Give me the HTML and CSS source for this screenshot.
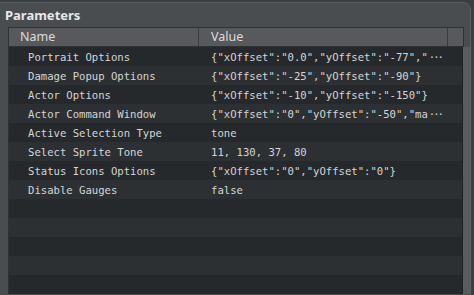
FILE: index.html
```html
<!DOCTYPE html>
<html lang="en">
<head>
    <meta charset="UTF-8">
    <title>Parameters</title>
    <link rel="stylesheet" href="styles.css">
</head>
<body>
    <div class="panel">
        <h1>Parameters</h1>
        <div class="table">
            <div class="head">
                <div class="col-name">Name</div>
                <div class="col-value">Value</div>
                <div class="col-corner"></div>
            </div>
            <div class="body">
                <div class="rows">
                    <div class="row"><span class="name">Portrait Options</span><span class="value">{"xOffset":"0.0","yOffset":"-77","<span class="more">···</span></span></div>
                    <div class="row"><span class="name">Damage Popup Options</span><span class="value">{"xOffset":"-25","yOffset":"-90"}</span></div>
                    <div class="row"><span class="name">Actor Options</span><span class="value">{"xOffset":"-10","yOffset":"-150"}</span></div>
                    <div class="row"><span class="name">Actor Command Window</span><span class="value">{"xOffset":"0","yOffset":"-50","ma<span class="more">···</span></span></div>
                    <div class="row"><span class="name">Active Selection Type</span><span class="value">tone</span></div>
                    <div class="row"><span class="name">Select Sprite Tone</span><span class="value">11, 130, 37, 80</span></div>
                    <div class="row"><span class="name">Status Icons Options</span><span class="value">{"xOffset":"0","yOffset":"0"}</span></div>
                    <div class="row"><span class="name">Disable Gauges</span><span class="value">false</span></div>
                    <div class="row"></div>
                    <div class="row"></div>
                    <div class="row"></div>
                    <div class="row"></div>
                    <div class="row"></div>
                </div>
                <div class="scroll"></div>
            </div>
        </div>
    </div>
</body>
</html>
```

FILE: styles.css
```css
body {
    margin: 0;
    background: #3c3f42;
    height: 295px;
    overflow: hidden;
    font-family: "Noto Sans", sans-serif;
}
.panel {
    margin: 2px 3px 0 -2px;
    height: 300px;
    background: #4a4d50;
    border: 1px solid #5c5f62;
    border-radius: 0 8px 0 0;
    padding: 4px 0 0 6px;
}
h1 {
    margin: 0 0 3px 0;
    font-size: 13px;
    font-weight: bold;
    color: #e8e8e8;
    height: 17px;
    line-height: 17px;
}
.table {
    margin-left: 3px;
}
.head {
    display: flex;
    height: 18px;
    margin-right: 6px;
    background: #57595c;
    border: 1px solid #2f3234;
    font-size: 12.5px;
    line-height: 18px;
    color: #dcdcdc;
}
.col-name {
    width: 190px;
    padding-left: 11px;
    border-right: 1px solid #3a3d40;
    box-sizing: border-box;
}
.col-value {
    flex: 1;
    padding-left: 12px;
    border-right: 1px solid #3a3d40;
}
.col-corner {
    width: 15px;
}
.body {
    display: flex;
}
.rows {
    flex: 1;
    background: #25292b;
    border-left: 1px solid #2f3234;
    border-right: 1px solid #1f2224;
}
.row {
    display: flex;
    height: 19px;
    line-height: 20px;
    font-family: "DejaVu Sans Mono", monospace;
    font-size: 10.6px;
    color: #d4d6d6;
    white-space: nowrap;
}
.row:nth-child(even) {
    background: #2c3032;
}
.name {
    width: 183px;
    padding-left: 19px;
    flex-shrink: 0;
}
.more {
    letter-spacing: -2px;
    margin-left: 1px;
}
.scroll {
    width: 7px;
    background: #595c5f;
}
```
